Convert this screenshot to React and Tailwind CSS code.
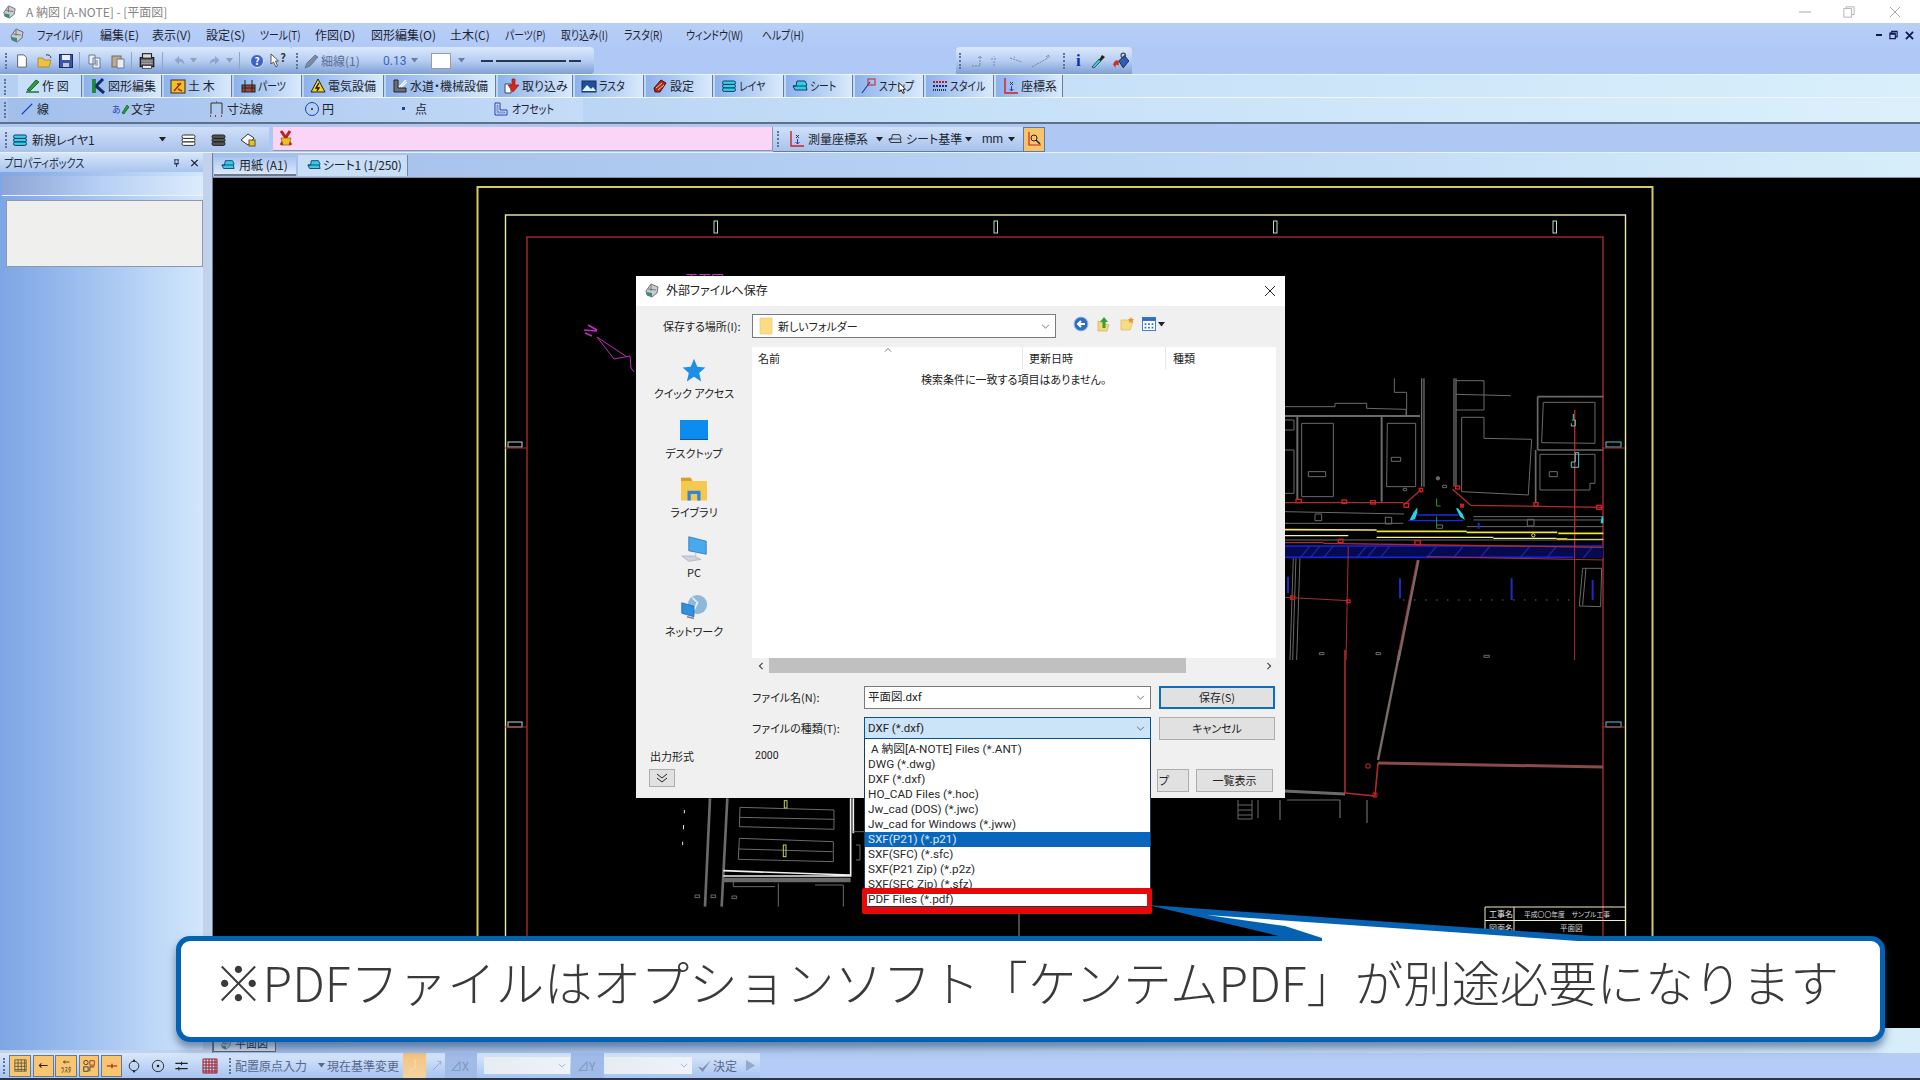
import React from 'react';

const Ic = ({ c = 'w-[16px] h-[16px]', v = '0 0 16 16', children }) => (
  <svg viewBox={v} className={c + ' shrink-0'}>{children}</svg>
);
const Logo = ({ c }) => (
  <Ic c={c}>
    <path d="M2 9 L7 2 L14 5 L13 11 L8 15 L3 13 Z" fill="#c9cdd2" stroke="#555" strokeWidth="0.8" />
    <path d="M3 13 L8 15 L8 11 L3 10 Z" fill="#3c8a78" />
    <path d="M7 3 L7 9 M4 7 L12 8" stroke="#666" strokeWidth="0.8" fill="none" />
  </Ic>
);
const Arrow = ({ c = '#222' }) => (
  <Ic c="w-[7px] h-[5px]" v="0 0 7 5"><path d="M0 0 H7 L3.5 4.5 Z" fill={c} /></Ic>
);
const Grip = () => (
  <div className="w-[3px] h-[16px] shrink-0 border-l-2 border-dotted border-[#5f7396]" />
);
const Layers = ({ c }) => (
  <Ic c={c}>
    <rect x="1.5" y="3" width="13" height="3.4" rx="1.6" fill="#35d0e2" stroke="#123a72" />
    <rect x="1.5" y="6.5" width="13" height="3.4" rx="1.6" fill="#35d0e2" stroke="#123a72" />
    <rect x="1.5" y="10" width="13" height="3.4" rx="1.6" fill="#35d0e2" stroke="#123a72" />
  </Ic>
);
const Sheet = ({ c }) => (
  <Ic c={c}>
    <path d="M5 3 H13 L15 7 L14 8 L15 12 H3 L1 8 H4 Z" fill="#32cfe0" stroke="#123a72" strokeWidth="1" />
    <path d="M1 8 H14" stroke="#123a72" strokeWidth="1" />
  </Ic>
);
const Coord = () => (
  <Ic c="w-[17px] h-[18px]" v="0 0 17 18">
    <path d="M3 1 V16 H16" stroke="#d02020" strokeWidth="1.4" fill="none" />
    <path d="M8 5 L11 8 M11 5 L8 8" stroke="#333" />
    <path d="M9.5 9 V14 M7.5 12 L9.5 14 L11.5 12" stroke="#2040c0" fill="none" />
  </Ic>
);

const KANA = 'inline-block origin-left scale-x-[0.82] whitespace-nowrap';

const TABS = [
  { w: 'w-[64px]', l: '作 図', active: true, i: <Ic><path d="M2 14 H15" stroke="#136a2a" strokeWidth="1.4" /><path d="M3 12 L12 2 L15 4 L6 13 Z" fill="#2d9c3c" stroke="#0d4a1c" strokeWidth="0.8" /></Ic> },
  { w: 'w-[78px]', l: '図形編集', i: <Ic><path d="M2 1 H6 V15 H2 Z" fill="#1d8c3a" /><path d="M6 8 L13 1 M6 8 L14 15" stroke="#152a70" strokeWidth="3" /></Ic> },
  { w: 'w-[68px]', l: '土 木', i: <Ic><rect x="1" y="2" width="14" height="13" fill="#f1c21c" stroke="#30302c" /><path d="M4 13 L11 5 M7 6 H11 M8 11 L12 13" stroke="#a8281c" strokeWidth="1.6" /></Ic> },
  { w: 'w-[68px]', l: 'パーツ', k: true, i: <Ic><rect x="2" y="7" width="13" height="7" fill="#9e4a3a" stroke="#222" /><path d="M5 2 V14 M12 2 V14 M2 10 H15" stroke="#222" /></Ic> },
  { w: 'w-[80px]', l: '電気設備', i: <Ic><path d="M8 1 L15 14 H1 Z" fill="#f4d21e" stroke="#222" /><path d="M9 5 L6 10 H9 L7 13" stroke="#111" fill="none" strokeWidth="1.3" /></Ic> },
  { w: 'w-[110px]', l: '水道・機械設備', i: <Ic><path d="M2 2 V14 H14 V10 H6 V2 Z" fill="#6a7078" stroke="#222" /><path d="M7 9 L14 2 M9 9 L15 4" stroke="#fff" strokeWidth="1.2" /></Ic> },
  { w: 'w-[75px]', l: '取り込み', i: <Ic><path d="M1 6 H7 V15 H1 Z" fill="#fff" stroke="#444" /><path d="M11 1 V7 H15 L9 14 L4 7 H8 V1 Z" fill="#e0241c" stroke="#8a0f0a" strokeWidth="0.6" /></Ic> },
  { w: 'w-[69px]', l: 'ラスタ', k: true, i: <Ic><rect x="1" y="3" width="14" height="11" fill="#1e4e9c" stroke="#16315e" /><path d="M1 13 L6 7 L10 11 L12 9 L15 13 Z" fill="#dff4f4" /></Ic> },
  { w: 'w-[67px]', l: '設定', i: <Ic><path d="M2 10 L9 2 L14 5 L8 14 L3 14 Z" fill="#b0281c" stroke="#4a120c" /><path d="M4 10 L10 5 M6 12 L12 7" stroke="#f0c8a0" /></Ic> },
  { w: 'w-[69px]', l: 'レイヤ', k: true, i: <Layers /> },
  { w: 'w-[67px]', l: 'シート', k: true, i: <Sheet /> },
  { w: 'w-[69px]', l: 'スナップ', k: true, i: <Ic><path d="M1 15 L9 4" stroke="#1f3f9e" strokeWidth="1.2" /><rect x="7" y="1" width="7" height="6" fill="none" stroke="#d02020" /></Ic> },
  { w: 'w-[68px]', l: 'スタイル', k: true, i: <Ic><path d="M1 4 H15" stroke="#c02020" strokeWidth="2" strokeDasharray="2 1" /><path d="M1 8 H15" stroke="#202880" strokeWidth="2" strokeDasharray="2 1" /><path d="M1 12 H15" stroke="#333" strokeWidth="2" strokeDasharray="1 1" /></Ic> },
  { w: 'w-[67px]', l: '座標系', i: <Coord /> },
];

const MENU = [
  ['w-[63px]', 'ファイル(F)', true], ['w-[52px]', '編集(E)'], ['w-[54px]', '表示(V)'], ['w-[54px]', '設定(S)'],
  ['w-[55px]', 'ツール(T)', true], ['w-[56px]', '作図(D)'], ['w-[79px]', '図形編集(O)'], ['w-[55px]', '土木(C)'],
  ['w-[56px]', 'パーツ(P)', true], ['w-[63px]', '取り込み(I)', true], ['w-[62px]', 'ラスタ(R)', true], ['w-[76px]', 'ウィンドウ(W)', true], ['w-[60px]', 'ヘルプ(H)', true],
];

const DROP = [
  ['A 納図[A-NOTE] Files (*.ANT)', 'pl-[6px]'], ['DWG (*.dwg)', ''], ['DXF (*.dxf)', ''], ['HO_CAD Files (*.hoc)', ''],
  ['Jw_cad (DOS) (*.jwc)', ''], ['Jw_cad for Windows (*.jww)', ''], ['SXF(P21) (*.p21)', 'bg-[#0a66bd] text-[#dbe8f5]'],
  ['SXF(SFC) (*.sfc)', ''], ['SXF(P21 Zip) (*.p2z)', ''], ['SXF(SFC Zip) (*.sfz)', ''], ['PDF Files (*.pdf)', ''],
];

const G = '#6a6a6a';
const R = '#b02c2c';

function Cad() {
  return (
    <svg viewBox="213 178 1707 850" className="block w-[1707px] h-[850px]" fill="none">
      <rect x="477.5" y="187" width="1175" height="1000" stroke="#d4cc62" strokeWidth="2" />
      <rect x="505.5" y="215" width="1120" height="900" stroke="#ecedb0" strokeWidth="1.4" />
      <rect x="527" y="237" width="1076" height="800" stroke="#a82a2a" strokeWidth="1.4" />
      <g stroke="#b8d8d8" strokeWidth="1">
        <rect x="714" y="221" width="3.5" height="12" /><rect x="994" y="221" width="3.5" height="12" />
        <rect x="1273.5" y="221" width="3.5" height="12" /><rect x="1553" y="221" width="3.5" height="12" />
        <rect x="508" y="442" width="14" height="5" /><rect x="508" y="722" width="14" height="5" />
        <rect x="1606" y="442" width="15" height="5" stroke="#5cc4d4" /><rect x="1606" y="722" width="15" height="5" stroke="#5cc4d4" />
      </g>
      <path d="M1603 448 H1625 M1603 727 H1625" stroke={R} />
      <path d="M505 448 H527 M505 727 H527" stroke={R} />
      <g stroke="#c02ec0" strokeWidth="1">
        <path d="M584 330 L597 331 M588 325 L597 330 M585 333 L592 336" strokeWidth="1.6" />
        <path d="M597 337 L614 359 L630 356 L631 368 L634 372 M597 337 L627 357" />
      </g>
      <text x="685" y="284" fill="#c02ec0" fontSize="13" fontFamily="'Noto Sans CJK JP',sans-serif">平面図</text>

      <g transform="translate(1280 360) scale(0.3333)" strokeWidth="3" stroke={G}>
        <path d="M12 168 H420 M52 168 V420 M305 168 V425" strokeWidth="6" />
        <path d="M12 140 H165 V130 H260 V145 L378 148 V165 M343 55 V97 H380 V165" />
        <path d="M425 55 V380 M432 55 V380 M522 55 V380 M528 55 V380" strokeWidth="4" />
        <path d="M528 62 H612 V150 H528 M528 103 L692 107" />
        <path d="M65 190 H160 V410 H65 Z M322 190 H407 V380 H320 Z M85 335 H137 V350 H85 Z M334 292 H362 V304 H334 Z" />
        <path d="M545 172 H612 V235 L755 238 L745 405 L545 395 Z" />
        <path d="M773 110 H970 M773 110 V270 M767 270 V430 M773 270 H970" strokeWidth="5" />
        <path d="M790 127 H945 V250 L785 248 Z M780 283 H945 V370 H930 V390 H780 Z M808 335 H832 V350 H808 Z" />
        <path d="M12 180 H42 V210 H12 M12 270 H42 V400 H12" />
        <path d="M12 455 L372 462 M580 470 H970 M12 490 H370 M560 500 H970 M12 540 H970 M580 480 H970" />
        <path d="M105 462 H125 V482 H105 Z M316 472 H335 V492 H316 Z M742 478 H762 V498 H742 Z M370 385 H380 V392 H370 Z M488 376 H500 V383 H488 Z M470 495 H488 V505 H470 Z" />
        <circle cx="474" cy="355" r="5" fill={G} />
        <path d="M40 590 L30 900 M60 590 L50 900 M48 590 L38 900 M908 625 H965 L962 740 L898 738 L908 625 M918 625 L908 735" />
        <path d="M118 878 H132 V884 H118 Z M288 878 H302 V884 H288 Z M612 886 H628 V892 H612 Z" />
        <path d="M370 720 H890" strokeDasharray="3 30" stroke="#999" />
        <rect x="12" y="558" width="958" height="36" fill="#060a50" stroke="none" />
        <path d="M60 594 L90 558 M90 594 L120 558 M130 594 L160 558 M230 594 L260 558 M260 594 L290 558 M300 594 L330 558 M440 594 L470 558 M520 594 L550 558 M600 594 L630 558 M720 594 L750 558 M800 594 L830 558 M910 594 L940 558" stroke="#1c2496" strokeWidth="4" />
        <path d="M12 558 H970 M12 592 H880" stroke="#1a22e0" strokeWidth="5" />
        <path d="M12 428 H370 M572 436 L970 442 M12 548 L130 547 M130 550 L970 562 M372 434 L422 390 M518 388 L572 436 M884 150 V560" stroke={R} strokeWidth="4" />
        <path d="M884 150 V900 M12 712 L205 722 M205 560 L198 900 M440 590 L970 600" stroke={R} strokeWidth="3" />
        <path d="M415 600 L355 900" stroke="#7a6666" strokeWidth="8" />
        <path d="M415 600 L355 900" stroke={R} strokeWidth="2" transform="translate(-4 0)" />
        <g stroke="#d02020" strokeWidth="4">
          <rect x="48" y="418" width="16" height="10" /><rect x="186" y="420" width="14" height="10" /><rect x="272" y="422" width="14" height="10" />
          <rect x="372" y="430" width="14" height="12" /><rect x="418" y="385" width="10" height="10" /><rect x="527" y="378" width="12" height="9" />
          <rect x="542" y="433" width="8" height="8" fill="#d02020" /><rect x="762" y="428" width="12" height="10" /><rect x="950" y="436" width="14" height="12" />
          <rect x="175" y="538" width="14" height="10" /><rect x="405" y="542" width="16" height="12" /><rect x="32" y="708" width="12" height="10" /><rect x="200" y="720" width="10" height="8" />
        </g>
        <path d="M412 442 L400 458 L388 482 L405 478 L412 458 Z M528 445 L540 470 L555 480 L548 462 L534 445 Z M965 470 L970 470 V490 H962 Z" fill="#26d4e8" stroke="none" />
        <path d="M410 465 H535 M385 482 H550" stroke="#2228e0" strokeWidth="4" />
        <path d="M24 650 V700 M360 655 V715 M695 655 V720 M938 660 V720 M596 488 V506" stroke="#1c2cbf" strokeWidth="6" />
        <path d="M470 415 V438 H482 M470 470 V500" stroke="#20a030" strokeWidth="3" />
        <g strokeWidth="3">
          <path d="M12 509 L290 510" stroke="#f2e86a" strokeWidth="5" />
          <path d="M290 514 H560 M560 517 H832 M835 520 H970" stroke="#f0e238" strokeWidth="5" />
          <path d="M12 527 H205 M290 532 H640 M640 535 H830" stroke="#f3efa0" strokeWidth="4" />
          <path d="M830 537 H862" stroke="#f0e238" strokeWidth="5" />
          <path d="M862 538 H970" stroke="#f3efa0" strokeWidth="3" />
        </g>
        <path d="M876 180 H886 V198 H874 V190 M880 162 V178 M886 278 H896 V322 H874 V306 H886 Z" stroke="#5cc8cc" />
        <circle cx="760" cy="526" r="5" stroke="#e8e060" />
      </g>

      <g strokeLinejoin="round">
        <path d="M1345 650 V793 L1375 796 L1378 763" stroke={R} strokeWidth="1.6" />
        <path d="M1400 650 L1378 760" stroke="#7a6a6a" strokeWidth="2.4" />
        <path d="M1378 763 L1603 767" stroke="#8a4a4a" strokeWidth="3" />
        <path d="M1284 791 L1345 794" stroke={G} strokeWidth="3" />
        <path d="M1287 800 H1340 V818 M1280 800 V820 M1367 800 V823" stroke={G} strokeWidth="1.2" />
        <rect x="1366" y="764" width="4" height="4" stroke="#d02020" />
        <rect x="1373" y="793" width="4" height="4" stroke="#d02020" />
        <path d="M1238 800 V819 H1252 V800 M1238 805 H1252 M1238 810 H1252 M1238 815 H1252 M1258 800 V818" stroke={G} />
        <path d="M1019 907 V936" stroke={G} strokeWidth="1.4" />
      </g>

      <g transform="translate(640 780) scale(0.3333)" stroke={G} strokeWidth="3">
        <path d="M210 55 L195 380 M262 55 L245 380" strokeWidth="8" />
        <path d="M300 82 L582 90 V148 L298 140 Z M300 112 L582 118 M298 175 L580 185 V245 L295 238 Z M296 207 L578 215" />
        <path d="M250 300 H632" strokeWidth="14" />
        <path d="M632 55 V290 M640 55 V160 M250 272 L630 285 M250 288 H630" stroke="#f0f0f0" strokeWidth="5" />
        <path d="M415 310 V380 M280 305 V320 H405 M525 315 H610 V380 M640 155 H680 M648 195 H660 V240 H648" />
        <rect x="433" y="62" width="8" height="22" stroke="#c8d060" />
        <rect x="430" y="195" width="8" height="35" stroke="#c8d060" />
        <path d="M133 90 V100 M131 135 L130 148 M128 185 V195" stroke="#eee" />
        <path d="M165 345 H179 V353 H165 Z M213 345 H227 V353 H213 Z M276 348 H290 V356 H276 Z" />
      </g>

      <g>
        <path d="M1485 936 V907 H1625 M1514 907 V936 M1485 920.5 H1625" stroke="#f0f0c0" />
        <text x="1489" y="917" fill="#e8e8e8" fontSize="8" fontFamily="'Noto Sans CJK JP',sans-serif">工事名</text>
        <text x="1524" y="917" fill="#d8d8d8" fontSize="6.800" fontFamily="'Noto Sans CJK JP',sans-serif">平成〇〇年度　サンプル工事</text>
        <text x="1489" y="931" fill="#e8e8e8" fontSize="8" fontFamily="'Noto Sans CJK JP',sans-serif">図面名</text>
        <text x="1560" y="931" fill="#d8d8d8" fontSize="7.500" fontFamily="'Noto Sans CJK JP',sans-serif">平面図</text>
      </g>
    </svg>
  );
}

function SideItem({ icon, label }) {
  return (
    <div className="h-[59.6px] flex flex-col items-center pt-[9px]">
      <div className="h-[28px] flex items-center justify-center">{icon}</div>
      <div className="mt-[1px] text-[11px] leading-[16px] text-[#222]">{label}</div>
    </div>
  );
}

function Dialog() {
  return (
    <div className="absolute left-[636px] top-[276px] w-[649px] h-[522px] bg-[#f0f0f0] flex flex-col text-[11px] text-[#222]">
      <div className="h-[30px] bg-white flex items-center pl-[8px] pb-[2px] relative">
        <Logo c="w-[16px] h-[16px]" />
        <span className="ml-[6px] text-[12px]">外部ファイルへ保存</span>
        <svg viewBox="0 0 12 12" className="w-[12px] h-[12px] absolute right-[9px] top-[9px]"><path d="M1 1 L11 11 M11 1 L1 11" stroke="#222" strokeWidth="1" /></svg>
      </div>
      <div className="flex items-center mt-[8px] h-[24px]">
        <div className="w-[116px] pl-[27px] text-[11px] whitespace-nowrap">保存する場所(I):</div>
        <div className="w-[304px] h-[24px] bg-white border border-[#7a7a7a] flex items-center pl-[6px] pr-[5px]">
          <Ic c="w-[14px] h-[18px]" v="0 0 14 18"><rect x="1" y="1" width="12" height="16" fill="#fbdc84" stroke="#e8c464" strokeWidth="0.6" /></Ic>
          <span className="ml-[5px] flex-1 text-[11px]">新しいフォルダー</span>
          <svg viewBox="0 0 10 6" className="w-[9px] h-[5px]"><path d="M1 1 L5 5 L9 1" stroke="#555" fill="none" /></svg>
        </div>
        <div className="flex items-center ml-[17px] gap-[7px] pb-[4px]">
          <Ic><circle cx="8" cy="8" r="7" fill="#2a6fc4" stroke="#9cc0e8" /><path d="M12 8 H5 M8 5 L5 8 L8 11" stroke="#fff" strokeWidth="2" fill="none" /></Ic>
          <Ic><path d="M2 5 L2 15 H11 L13 9 Z" fill="#f4d878" stroke="#c8a848" strokeWidth="0.6" /><path d="M8 1 L12 6 H9.5 V12 H6.5 V6 H4 Z" fill="#3d9c3a" /></Ic>
          <Ic><path d="M2 4 H8 L14 6 L11 14 H2 Z" fill="#f6dc82" stroke="#d8b050" strokeWidth="0.6" /><path d="M12 1 L13 3 L15 3 L13.5 5 L14 7 L12 6 L10 7 L10.5 5 L9 3 L11 3 Z" fill="#f09020" /></Ic>
          <div className="flex items-center gap-[2px]">
            <Ic c="w-[14px] h-[14px]"><rect x="0.5" y="0.5" width="15" height="15" fill="#fff" stroke="#2a70c8" /><rect x="0.5" y="0.5" width="15" height="4" fill="#2a70c8" /><path d="M4 7 V9 M8 7 V9 M12 7 V9 M4 11 V13 M8 11 V13 M12 11 V13" stroke="#2a70c8" strokeWidth="2" /></Ic>
            <Arrow c="#223" />
          </div>
        </div>
      </div>
      <div className="flex mt-[9px] h-[326px]">
        <div className="w-[116px] flex flex-col">
          <SideItem label="クイック アクセス" icon={<Ic c="w-[26px] h-[26px]"><path d="M8 1 L10 6 L15 6.5 L11.2 9.8 L12.4 15 L8 12.2 L3.6 15 L4.8 9.8 L1 6.5 L6 6 Z" fill="#1e8fe6" /></Ic>} />
          <SideItem label="デスクトップ" icon={<div className="w-[28px] h-[20px] bg-[#0d8cf0] border-b border-[#0a5aa8]" />} />
          <SideItem label="ライブラリ" icon={<Ic c="w-[28px] h-[26px]"><path d="M0 1 H6 L7 3 H16 V15 H0 Z" fill="#f6c850" /><path d="M0 1 H6 L7 3 H0 Z" fill="#d8a028" /><path d="M4 15 V9 H12 V15 H10 V11 H6 V15 Z" fill="#2f86d8" /></Ic>} />
          <SideItem label="PC" icon={<Ic c="w-[28px] h-[28px]"><path d="M5 1 L15 3.5 V11 L5 9 Z" fill="#4aa8ec" stroke="#1d6cb0" strokeWidth="0.4" /><path d="M9 10 V12 M1 12 L8 12 L12 14 L5 15 Z" fill="#cfd4da" stroke="#aab" strokeWidth="0.4" /></Ic>} />
          <SideItem label="ネットワーク" icon={<Ic c="w-[28px] h-[28px]"><circle cx="10" cy="6" r="5.5" fill="#8db8d8" /><path d="M7 2 L10 5 L8 9" stroke="#dfeef8" fill="none" /><path d="M1 5 L8 7 V13 L1 11 Z" fill="#2f8fe0" stroke="#1a5f9f" strokeWidth="0.4" /><path d="M4 13 L8 14" stroke="#888" /></Ic>} />
        </div>
        <div className="w-[524px] flex flex-col">
          <div className="h-[311px] bg-white relative">
            <div className="flex h-[22px] items-center text-[11px]">
              <div className="w-[271px] pl-[6px] h-full flex items-center border-r border-[#e6e6e6]">名前</div>
              <div className="w-[143px] pl-[6px] h-full flex items-center border-r border-[#e6e6e6]">更新日時</div>
              <div className="pl-[7px]">種類</div>
            </div>
            <svg viewBox="0 0 8 5" className="w-[8px] h-[4px] absolute left-[132px] top-[1px]"><path d="M0.5 4.5 L4 0.5 L7.500 4.500" stroke="#666" fill="none" /></svg>
            <div className="mt-[5px] pl-[169px] text-[11px]">検索条件に一致する項目はありません。</div>
          </div>
          <div className="h-[15px] flex items-center text-[#444]">
            <svg viewBox="0 0 6 10" className="w-[6px] h-[8px] ml-[6px]"><path d="M5 1 L1 5 L5 9" stroke="#444" strokeWidth="1.4" fill="none" /></svg>
            <div className="ml-[5px] w-[417px] h-[15px] bg-[#c0c0c0]" />
            <svg viewBox="0 0 6 10" className="w-[6px] h-[8px] ml-[80px]"><path d="M1 1 L5 5 L1 9" stroke="#444" strokeWidth="1.4" fill="none" /></svg>
          </div>
        </div>
      </div>
      <div className="flex mt-[13px] items-start">
        <div className="w-[228px] pl-[116px] h-[22px] flex items-center whitespace-nowrap">ファイル名(N):</div>
        <div className="w-[287px] h-[23px] bg-white border border-[#7a7a7a] flex items-center pl-[3px] pr-[5px]">
          <span className="flex-1 font-['Roboto','Noto_Sans_CJK_JP',sans-serif] text-[11.500px]">平面図.dxf</span>
          <svg viewBox="0 0 10 6" className="w-[9px] h-[5px]"><path d="M1 1 L5 5 L9 1" stroke="#555" fill="none" /></svg>
        </div>
        <div className="ml-[8px] w-[116px] h-[23px] bg-[#e1e1e1] border-2 border-[#0a6fc2] flex items-center justify-center">保存(S)</div>
      </div>
      <div className="flex mt-[8px] items-start">
        <div className="w-[228px] pl-[116px] h-[22px] flex items-center whitespace-nowrap">ファイルの種類(T):</div>
        <div className="w-[287px] h-[22px] bg-[#cce4f7] border border-[#005499] flex items-center pl-[3px] pr-[5px]">
          <span className="flex-1 pt-[1px] font-['Roboto','Noto_Sans_CJK_JP',sans-serif] text-[11.500px]">DXF (*.dxf)</span>
          <svg viewBox="0 0 10 6" className="w-[9px] h-[5px]"><path d="M1 1 L5 5 L9 1" stroke="#555" fill="none" /></svg>
        </div>
        <div className="ml-[8px] w-[116px] h-[23px] bg-[#e1e1e1] border border-[#adadad] flex items-center justify-center">キャンセル</div>
      </div>
      <div className="flex mt-[9px] h-[14px] items-center">
        <div className="w-[119px] pl-[14px]">出力形式</div>
        <div className="text-[10.500px] font-['Roboto',sans-serif]">2000</div>
      </div>
      <div className="flex mt-[6px] items-start">
        <div className="ml-[13px] w-[26px] h-[18px] bg-[#e1e1e1] border border-[#adadad] flex items-center justify-center">
          <svg viewBox="0 0 12 10" className="w-[12px] h-[10px]"><path d="M1 1 L6 5 L11 1 M1 5 L6 9 L11 5" stroke="#222" fill="none" /></svg>
        </div>
        <div className="ml-[482px] w-[32px] h-[23px] bg-[#e1e1e1] border border-[#adadad] flex items-center justify-start pl-[1px]">プ</div>
        <div className="ml-[7px] w-[77px] h-[23px] bg-[#e1e1e1] border border-[#adadad] flex items-center justify-center">一覧表示</div>
      </div>
    </div>
  );
}

export default function App() {
  const barV = 'bg-linear-to-b from-[#dbe8fb] via-[#b7cff2] to-[#7f9fd6]';
  return (
    <div className="relative w-full h-screen overflow-hidden flex flex-col bg-[#afc8f5] text-[12px] leading-none text-[#1c2430] font-['Noto_Sans_CJK_JP','Liberation_Sans',sans-serif] [font-feature-settings:'palt']">
      {/* title */}
      <div className="h-[23px] shrink-0 bg-white flex items-center pl-[2px] relative">
        <Logo c="w-[15px] h-[15px]" />
        <span className="ml-[9px] text-[12px] text-[#858585]">A 納図 [A-NOTE] - [平面図]</span>
        <div className="ml-auto flex items-center text-[#9a9a9a]">
          <svg viewBox="0 0 14 14" className="w-[14px] h-[14px] mr-[31px]"><path d="M1 7 H13" stroke="#aaa" /></svg>
          <svg viewBox="0 0 14 14" className="w-[12px] h-[12px] mr-[34px]"><path d="M1 3 H10 V13 H1 Z M3.500 3 V1 H13 V10 H10" stroke="#aaa" fill="none" /></svg>
          <svg viewBox="0 0 14 14" className="w-[12px] h-[12px] mr-[19px]"><path d="M1 1 L13 13 M13 1 L1 13" stroke="#999" /></svg>
        </div>
      </div>
      {/* menu */}
      <div className="h-[24px] shrink-0 flex items-center pl-[9px] bg-linear-to-b from-[#b9cff5] to-[#afc9f8] relative">
        <Logo c="w-[16px] h-[16px]" />
        <div className="flex ml-[12px] whitespace-nowrap">
          {MENU.map(([w, t, k]) => (
            <div key={t} className={w}><span className={k ? KANA : ''}>{t}</span></div>
          ))}
        </div>
        <div className="ml-auto mr-[6px] flex items-center gap-[7px] text-[#101a50] font-bold">
          <div className="w-[6px] h-[2.500px] bg-[#101a50]" />
          <svg viewBox="0 0 10 10" className="w-[9px] h-[10px]"><path d="M3 3 V1 H9 V7 H7 M1 3 H7 V9 H1 Z M1 4 H7" stroke="#101a50" strokeWidth="1.3" fill="none" /></svg>
          <svg viewBox="0 0 10 10" className="w-[9px] h-[9px]"><path d="M1 1 L9 9 M9 1 L1 9" stroke="#101a50" strokeWidth="2" /></svg>
        </div>
      </div>
      {/* toolbar 1 */}
      <div className="h-[27px] shrink-0 flex items-stretch">
        <div className={'w-[292px] flex items-center pl-[5px] rounded-tr-[4px] ' + barV}>
          <Grip />
          <div className="ml-[7px]"><Ic c="w-[14px] h-[16px]"><path d="M3 1 H10 L13 4 V15 H3 Z" fill="#fff" stroke="#555" /></Ic></div>
          <div className="ml-[8px]"><Ic><path d="M1 5 H6 L7 7 H14 L12 14 H1 Z" fill="#f0c040" stroke="#a07818" strokeWidth="0.7" /><path d="M9 2 Q13 1 14 5" stroke="#333" fill="none" /></Ic></div>
          <div className="ml-[5px]"><Ic><rect x="1.500" y="1.500" width="13" height="13" fill="#3a54a8" stroke="#1c2c60" /><rect x="4" y="2" width="8" height="5" fill="#e8edf6" /><rect x="5" y="10" width="6" height="4" fill="#c0c8d8" /></Ic></div>
          <div className="ml-[5px] w-px h-[18px] bg-[#8fa5c8]" />
          <div className="ml-[7px]"><Ic><path d="M2 2 H8 V11 H2 Z M6 5 H13 V15 H6 Z" fill="#eef2f8" stroke="#6a7a95" /><path d="M8 8 H11 M8 10 H11 M8 12 H11" stroke="#6a7a95" /></Ic></div>
          <div className="ml-[7px]"><Ic><rect x="2" y="3" width="9" height="11" fill="#c0a888" stroke="#6a6a6a" /><path d="M7 6 H14 V15 H7 Z" fill="#e8edf4" stroke="#6a7a95" /></Ic></div>
          <div className="ml-[5px] w-px h-[18px] bg-[#8fa5c8]" />
          <div className="ml-[6px]"><Ic c="w-[18px] h-[18px]"><rect x="2" y="5" width="12" height="8" fill="#666" stroke="#111" /><rect x="4" y="1.500" width="8" height="4" fill="#ddd" stroke="#222" /><path d="M3 8 H13 M3 10 H13" stroke="#ccc" strokeWidth="0.7" /><rect x="4" y="12" width="8" height="2.500" fill="#eee" stroke="#222" strokeWidth="0.6" /></Ic></div>
          <div className="ml-[6px] w-px h-[18px] bg-[#8fa5c8]" />
          <div className="ml-[9px] opacity-40 flex items-center gap-[4px]"><Ic c="w-[14px] h-[14px]"><path d="M3 7 L8 2 V5 Q14 5 14 12 Q12 8 8 9 V12 Z" fill="#5a7090" /></Ic><Arrow c="#555" /></div>
          <div className="ml-[11px] opacity-40 flex items-center gap-[4px]"><Ic c="w-[14px] h-[14px]"><path d="M13 7 L8 2 V5 Q2 5 2 12 Q4 8 8 9 V12 Z" fill="#5a7090" /></Ic><Arrow c="#555" /></div>
          <div className="ml-[6px] w-px h-[18px] bg-[#8fa5c8]" />
          <div className="ml-[9px]"><Ic><circle cx="8" cy="8" r="6.500" fill="#3c64c8" stroke="#dde" /><text x="8" y="11.500" textAnchor="middle" fontSize="10" fontWeight="700" fill="#fff">?</text></Ic></div>
          <div className="ml-[5px]"><Ic c="w-[18px] h-[16px]" v="0 0 18 16"><path d="M1 1 V11 L3.500 9 L6 14 L7.500 13 L5.500 8 H8.500 Z" fill="#fff" stroke="#333" strokeWidth="0.8" /><text x="13" y="9" textAnchor="middle" fontSize="11" fontWeight="700" fill="#333">?</text></Ic></div>
        </div>
        <div className={'w-[302px] flex items-center pl-[4px] rounded-r-[4px] text-[#5a6d96] ' + barV}>
          <Grip />
          <div className="ml-[4px]"><Ic><path d="M2 15 L4 10 L12 2 L15 4 L7 13 Z" fill="#7c8ba5" stroke="#4a5a78" strokeWidth="0.6" /></Ic></div>
          <span className="ml-[2px] w-[62px]">細線(1)</span>
          <span className="text-[#3c62c8] w-[28px] font-['Roboto',sans-serif]">0.13</span>
          <Arrow c="#6a7d9f" />
          <div className="ml-[13px] w-[20px] h-[16px] bg-white border border-[#99a]" />
          <div className="ml-[7px]"><Arrow c="#6a7d9f" /></div>
          <svg viewBox="0 0 100 2" className="ml-[15px] w-[102px] h-[2px]"><path d="M0 1 H12 M15 1 H85 M88 1 H100" stroke="#2a3550" strokeWidth="2" /></svg>
        </div>
        <div className={'ml-[362px] w-[176px] flex items-center pl-[3px] rounded-t-[4px] ' + barV}>
          <Grip />
          <svg viewBox="0 0 84 16" className="ml-[8px] w-[84px] h-[16px]" fill="none" stroke="#77859e"><path d="M2 13 H10 V3 M8 5 L10 3 L12 5 M24 3 V3.500 M21 6 H27 M24 8 V13 M40 5 L52 9 M44 4 H45 M62 14 L78 5 V2 M76 4 L78 2 L80 4" strokeDasharray="2 1" /></svg>
          <div className="ml-[9px]"><Grip /></div>
          <div className="ml-[10px] text-[#1230a8] font-bold text-[17px] font-['Liberation_Serif',serif]">i</div>
          <div className="ml-[9px]"><Ic><path d="M2 14 L9 6 L11 8 L4 15 Z" fill="#3ad0dc" stroke="#222" strokeWidth="0.7" /><path d="M9 7 L12 2 L15 4 L11 8 Z" fill="#222" /></Ic></div>
          <div className="ml-[6px]"><Ic c="w-[18px] h-[18px]"><path d="M6 8 L11 3 L15 8 L10 14 Z" fill="#2a5fc0" stroke="#112" strokeWidth="0.7" /><circle cx="10" cy="3" r="2" fill="none" stroke="#445" /><path d="M1 11 Q3 6 6 8 L6 12 Q3 10 3 14 Z" fill="#d03020" /></Ic></div>
        </div>
      </div>
      {/* tabs */}
      <div className="h-[23px] shrink-0 flex items-stretch pl-[18px] gap-[2px] bg-linear-to-r from-[#b5cff2] via-[#c4def7] to-[#d9f0fb] border-t border-[#e9f4fd] relative">
        <div className="absolute left-[4px] top-[4px]"><Grip /></div>
        {TABS.map((t) => (
          <div key={t.l} className={t.w + ' flex items-center pl-[6px] gap-[2px] whitespace-nowrap border-r border-[#6a7b93] ' + (t.active ? 'bg-[#c7dff8]' : 'bg-linear-to-r from-[#8db2ea] to-[#d9eafb]')}>
            {t.i}<span className={t.k ? KANA : ''}>{t.l}</span>
          </div>
        ))}
        <div className="absolute left-[898px] top-[6px]">
          <svg viewBox="0 0 10 14" className="w-[9px] h-[14px]"><path d="M1 1 V11 L3.500 9 L5.500 13 L7 12.300 L5.500 8.500 H8.500 Z" fill="#fff" stroke="#111" /></svg>
        </div>
      </div>
      {/* sub toolbar */}
      <div className="h-[27px] shrink-0 flex pl-[8px] border-t border-[#eef7fd] border-b-2 border-b-[#5f7186] bg-linear-to-r from-[#a9c4ee] via-[#c6e0f8] to-[#dcf0fb] relative">
        <div className="absolute left-[4px] top-[4px]"><Grip /></div>
        <div className="w-[575px] flex items-center pb-[3px] bg-linear-to-r from-[#a2bfec] to-[#c5dcf8]">
          <div className="ml-[12px]"><Ic c="w-[14px] h-[14px]"><path d="M2 14 L14 2" stroke="#1a3fb8" strokeWidth="1.300" /></Ic></div>
          <span className="ml-[3px] w-[63px]">線</span>
          <div className="ml-[12px]"><Ic c="w-[18px] h-[14px]" v="0 0 18 14"><text x="0" y="11" fontSize="9" fill="#1a3fb8">あ</text><path d="M10 11 L15 3 L17 5 L12 12 Z" fill="#1f9f3a" stroke="#0a4a1c" strokeWidth="0.6" /></Ic></div>
          <span className="ml-[1px] w-[74px]">文字</span>
          <div className="ml-[4px]"><Ic c="w-[15px] h-[18px]" v="0 0 15 18"><path d="M2 14 V3 H13 V14" stroke="#333" fill="none" /><path d="M7 2 H8" stroke="#333" /><path d="M1 16 H2 M6 16 H7 M12 16 H13" stroke="#d02020" strokeWidth="2" /></Ic></div>
          <span className="ml-[3px] w-[71px]">寸法線</span>
          <div className="ml-[6px]"><Ic><circle cx="8" cy="8" r="6.500" stroke="#1a3fb8" fill="none" /><circle cx="8" cy="8" r="1" fill="#222" /></Ic></div>
          <span className="ml-[2px] w-[78px]">円</span>
          <div className="w-[3px] h-[3px] bg-[#1a3fb8] ml-[2px]" />
          <span className="ml-[10px] w-[78px]">点</span>
          <div><Ic><path d="M2 2 H7 V9 H14 V14 H2 Z" fill="#dfe9f8" stroke="#1c3fa8" /><path d="M4 4 H5 V11 H12 V12 H4 Z" fill="#fff" stroke="#1c3fa8" strokeWidth="0.6" /></Ic></div>
          <span className={'ml-[3px] ' + KANA}>オフセット</span>
        </div>
      </div>
      {/* layer row */}
      <div className="h-[29px] shrink-0 pt-[3px] flex items-stretch border-b border-[#e8f2fb] bg-[#aec7f3]">
        <div className="w-[269px] h-[25px] flex items-center pl-[5px] bg-linear-to-b from-[#cfe0f8] to-[#a9c2ec]">
          <Grip />
          <div className="ml-[4px]"><Layers /></div>
          <span className="ml-[4px] w-[127px]">新規レイヤ1</span>
          <Arrow />
          <div className="ml-[14px]"><Ic><rect x="2" y="3" width="13" height="3.400" rx="1.600" fill="#fff" stroke="#333" /><rect x="2" y="6.500" width="13" height="3.400" rx="1.600" fill="#fff" stroke="#333" /><rect x="2" y="10" width="13" height="3.400" rx="1.600" fill="#fff" stroke="#333" /></Ic></div>
          <div className="ml-[14px]"><Ic><rect x="2" y="3" width="13" height="3.400" rx="1.600" fill="#555" stroke="#222" /><rect x="2" y="6.500" width="13" height="3.400" rx="1.600" fill="#555" stroke="#222" /><rect x="2" y="10" width="13" height="3.400" rx="1.600" fill="#555" stroke="#222" /></Ic></div>
          <div className="ml-[14px]"><Ic><path d="M1 8 L8 2 L14 6 L8 13 Z" fill="#fff" stroke="#333" /><rect x="9" y="8" width="6" height="6" fill="#e8c020" stroke="#553" /></Ic></div>
        </div>
        <div className="w-[504px] h-[24px] flex">
          <div className="w-[4px]" />
          <div className="flex-1 bg-[#fbd5f7] border-r border-b border-[#8a97b0] flex items-center pl-[5px]">
            <Ic c="w-[16px] h-[18px]" v="0 0 16 18"><path d="M3 1 L13 15 M12 1 L3 15" stroke="#c02018" strokeWidth="3" /><path d="M3 8 L13 8 L11 15 H5 Z" fill="#f0c020" stroke="#6a4a10" strokeWidth="0.6" /></Ic>
          </div>
        </div>
        <div className="w-[272px] h-[25px] flex items-center pl-[4px] bg-linear-to-b from-[#cfe0f8] to-[#a9c2ec] border-b border-[#5f7ca8]">
          <Grip />
          <div className="ml-[8px]"><Coord /></div>
          <span className="ml-[3px] w-[68px] whitespace-nowrap">測量座標系</span>
          <Arrow />
          <div className="ml-[5px]"><Ic c="w-[14px] h-[14px]"><path d="M5 3 H13 L15 7 L14 8 L15 12 H3 L1 8 H4 Z M1 8 H14" fill="none" stroke="#222" /></Ic></div>
          <span className="ml-[4px] w-[59px] whitespace-nowrap">シート基準</span>
          <Arrow />
          <span className="ml-[10px] w-[26px] font-['Roboto',sans-serif]">mm</span>
          <Arrow />
          <div className="ml-[8px] w-[22px] h-[25px] bg-[#f6c46a] border border-[#5a7ab0] flex items-center justify-center">
            <Ic><path d="M3 1 V14 H15" stroke="#d02020" strokeWidth="1.200" fill="none" /><circle cx="8" cy="7" r="3" stroke="#223" fill="none" /><path d="M10 9 L14 13" stroke="#223" strokeWidth="1.500" /></Ic>
          </div>
        </div>
      </div>
      {/* main */}
      <div className="flex-1 flex min-h-0">
        <div className="w-[213px] shrink-0 flex flex-col bg-[#c3d2ec] border-r border-[#6d7f9b]">
          <div className="w-[203px] h-[19px] shrink-0 flex items-center pl-[4px] pr-[4px] bg-linear-to-b from-[#d6e6fa] to-[#a9c4ee] text-[#222e44]">
            <div className="flex-1"><span className="inline-block origin-left scale-x-[0.84] whitespace-nowrap">プロパティボックス</span></div>
            <svg viewBox="0 0 8 10" className="w-[7px] h-[8px]"><path d="M1 1 H7 M2 1 V6 H6 V1 M1 6 H7 M4 6 V10" stroke="#111830" fill="none" /></svg>
            <svg viewBox="0 0 10 10" className="ml-[10px] w-[9px] h-[8px]"><path d="M1 1 L9 9 M9 1 L1 9" stroke="#111830" strokeWidth="1.500" /></svg>
          </div>
          <div className="flex-1 w-[203px] flex flex-col bg-linear-to-r from-[#7ea5e4] via-[#a6c6f1] to-[#d2e7fc]">
            <div className="mt-[4px] ml-[2px] w-[201px] h-[20px] bg-linear-to-r from-[#8ca5d6] via-[#b7d0f4] to-[#dcecfc] border-b border-[#eaf3fc]" />
            <div className="mt-[4px] ml-[6px] w-[197px] h-[67px] bg-[#efefee] border border-[#8e98a8]" />
          </div>
          <div className="h-[3px] shrink-0" />
        </div>
        <div className="flex-1 flex flex-col min-w-0">
          <div className="h-[25px] shrink-0 flex items-end pb-[1px] bg-linear-to-r from-[#a3bfea] via-[#b9d4f4] to-[#d7eefa] border-b border-[#88929f] pl-[1px]">
            <div className="w-[82px] h-[19px] flex items-center pl-[7px] pb-[1px] bg-linear-to-b from-[#a9c5ee] to-[#dbe9f8] border-b-2 border-[#6a7a90]">
              <Sheet c="w-[14px] h-[14px]" /><span className="ml-[4px] whitespace-nowrap text-[12px]">用紙 (A1)</span>
            </div>
            <div className="ml-[2px] w-[110px] h-[21px] flex items-center pl-[9px] pb-[2px] bg-[#c8ddf6] border-r border-[#7688a0]">
              <Sheet c="w-[14px] h-[14px]" /><span className="ml-[2px] whitespace-nowrap text-[12px] tracking-[-0.200px]">シート1 (1/250)</span>
            </div>
          </div>
          <div className="h-[850px] shrink-0 bg-black overflow-hidden"><Cad /></div>
          <div className="h-[25px] shrink-0 flex items-end pb-[1px] bg-linear-to-r from-[#a3bfea] to-[#d7eefa]">
            <div className="w-[63px] h-[15px] bg-[#d4dfee] border border-[#566] flex items-start pl-[6px] text-[11px]">
              <Logo c="w-[12px] h-[12px]" /><span className="ml-[3px]">平面図</span>
            </div>
          </div>
        </div>
      </div>
      {/* status */}
      <div className="h-[25px] shrink-0 bg-[#b4ccf6] flex">
        <div className="w-[760px] flex items-center pl-[3px] bg-linear-to-b from-[#d9e7fb] to-[#a8c4f0] text-[#56678c]">
          <Grip />
          <div className="ml-[3px] w-[22px] h-[22px] bg-[#f9c56e] border border-[#5f7aa0] flex items-center justify-center"><Ic c="w-[13px] h-[13px]"><path d="M1 1 H15 V15 H1 Z M5 1 V15 M9 1 V15 M13 1 V15 M1 5 H15 M1 9 H15 M1 13 H15" stroke="#554" fill="none" /></Ic></div>
          <div className="ml-[2px] w-[21px] h-[22px] bg-[#f9c56e] border border-[#5f7aa0] flex items-center justify-center"><Ic c="w-[11px] h-[11px]"><path d="M2 8 H14 M5 5 L2 8 L5 11" stroke="#222" strokeWidth="1.500" fill="none" /></Ic></div>
          <div className="ml-[1px] w-[22px] h-[22px] bg-[#f9c56e] border border-[#5f7aa0] flex flex-col items-center justify-center text-[7px] text-[#333]"><Ic c="w-[11px] h-[8px]"><path d="M2 8 H14 M5 5 L2 8 L5 11" stroke="#222" strokeWidth="1.500" fill="none" /></Ic><span>ﾗｽﾀ</span></div>
          <div className="ml-[2px] w-[20px] h-[22px] bg-[#f9c56e] border border-[#5f7aa0] flex items-center justify-center"><Ic c="w-[14px] h-[14px]"><rect x="2" y="9" width="5" height="5" fill="none" stroke="#333" /><circle cx="4.500" cy="4" r="2.500" fill="none" stroke="#333" /><rect x="9" y="2" width="5" height="5" fill="none" stroke="#a22" /><path d="M9 14 V9 H14" stroke="#333" fill="none" /></Ic></div>
          <div className="ml-[2px] w-[21px] h-[22px] bg-[#f9c56e] border border-[#5f7aa0] flex items-center justify-center"><Ic c="w-[12px] h-[12px]"><path d="M1 8 H15 M8 5 V11" stroke="#a01818" strokeWidth="1.500" /></Ic></div>
          <div className="ml-[5px]"><Ic c="w-[14px] h-[16px]"><circle cx="8" cy="8" r="5.500" fill="none" stroke="#222" /><path d="M8 0 L6 3 H10 Z M8 16 L6 13 H10 Z" fill="#222" /></Ic></div>
          <div className="ml-[10px]"><Ic c="w-[14px] h-[14px]"><circle cx="8" cy="8" r="6.500" fill="none" stroke="#222" /><circle cx="8" cy="8" r="1.500" fill="#222" /></Ic></div>
          <div className="ml-[9px]"><Ic c="w-[15px] h-[14px]"><path d="M1 5 H15 M1 11 H15 M8 3 V7 M5 9 V13" stroke="#222" strokeWidth="1.200" /></Ic></div>
          <div className="ml-[13px]"><Ic><path d="M1 1 H15 V15 H1 Z M4 1 V15 M7 1 V15 M10 1 V15 M13 1 V15 M1 4 H15 M1 7 H15 M1 10 H15 M1 13 H15" stroke="#a01820" fill="none" /></Ic></div>
          <div className="ml-[11px]"><Grip /></div>
          <span className="ml-[3px] w-[83px] whitespace-nowrap">配置原点入力</span>
          <Arrow c="#56678c" />
          <span className="ml-[2px] w-[76px] whitespace-nowrap">現在基準変更</span>
          <div className="w-[23px] h-[25px] bg-linear-to-b from-[#f6c27c] to-[#f4d3a2] flex items-center justify-center"><Ic c="w-[13px] h-[13px]"><path d="M9 1 V11 L2 14 M7 3 L9 1 L11 3" stroke="#e6e2c8" fill="none" /></Ic></div>
          <div className="ml-[5px]"><Ic c="w-[13px] h-[13px]"><path d="M2 14 L12 4 M8 3 H12 V7" stroke="#8ea2c6" fill="none" /></Ic></div>
          <div className="ml-[1px] w-[32px] h-[25px] bg-[#a1bbe9] flex items-center pl-[5px] text-[#7e93bc]">⊿X</div>
          <div className="ml-[7px] w-[86px] h-[17px] bg-linear-to-r from-[#e6ecf2] to-[#eef3fb] flex items-center justify-end pr-[4px]">
            <svg viewBox="0 0 10 6" className="w-[8px] h-[5px]"><path d="M1 1 L5 5 L9 1" stroke="#9aa6bc" fill="none" /></svg>
          </div>
          <div className="ml-[1px] w-[33px] h-[25px] bg-[#a1bbe9] flex items-center pl-[6px] text-[#7e93bc]">⊿Y</div>
          <div className="w-[88px] h-[17px] bg-linear-to-r from-[#e6ecf2] to-[#eef3fb] flex items-center justify-end pr-[4px]">
            <svg viewBox="0 0 10 6" className="w-[8px] h-[5px]"><path d="M1 1 L5 5 L9 1" stroke="#9aa6bc" fill="none" /></svg>
          </div>
          <div className="ml-[5px]"><Ic c="w-[15px] h-[15px]"><path d="M1 9 L6 15 L15 2 L6 11 Z" fill="#7f8ea8" /></Ic></div>
          <span className="ml-[1px] w-[33px] whitespace-nowrap">決定</span>
          <Ic c="w-[9px] h-[11px]" v="0 0 9 11"><path d="M0 0 L9 5.500 L0 11 Z" fill="#94a9cc" /></Ic>
        </div>
      </div>
      <div className="h-[2px] shrink-0 bg-[#2a3548]" />

      {/* overlays */}
      <Dialog />
      <div className="absolute left-[864px] top-[739px] w-[287px] h-[168px] bg-white border-x border-b border-[#203a5a] flex flex-col pt-[3px] text-[11.750px] text-[#2a2a2a] leading-[15px] font-['Roboto','Noto_Sans_CJK_JP',sans-serif]">
        {DROP.map(([t, c]) => <div key={t} className={'h-[15px] shrink-0 whitespace-nowrap pl-[3px] ' + c}>{t}</div>)}
      </div>
      <div className="absolute left-[862px] top-[888px] w-[290px] h-[26px] border-x-[5px] border-t-[6px] border-b-[7px] border-[#e80808] rounded-[2px]" />
      <div className="absolute left-[176px] top-[936px] w-[1709px] h-[106px] bg-white border-[5px] border-[#0562b3] rounded-[14px] shadow-[0_6px_8px_rgba(30,60,110,0.55)] flex items-center justify-center pb-[16px] pr-[8px] text-[48.400px] font-light text-[#3a3a3a] whitespace-nowrap [font-feature-settings:normal]">
        ※PDFファイルはオプションソフト「ケンテムPDF」が別途必要になります
      </div>
      <svg viewBox="1140 900 470 45" className="absolute left-[1140px] top-[900px] w-[470px] h-[45px]">
        <polygon points="1148,905 1592,936 1592,941 1300,941" fill="#0562b3" />
        <polygon points="1207,915 1585,941.500 1322,941.500 1322,938 1285,926" fill="#fff" />
      </svg>
    </div>
  );
}
